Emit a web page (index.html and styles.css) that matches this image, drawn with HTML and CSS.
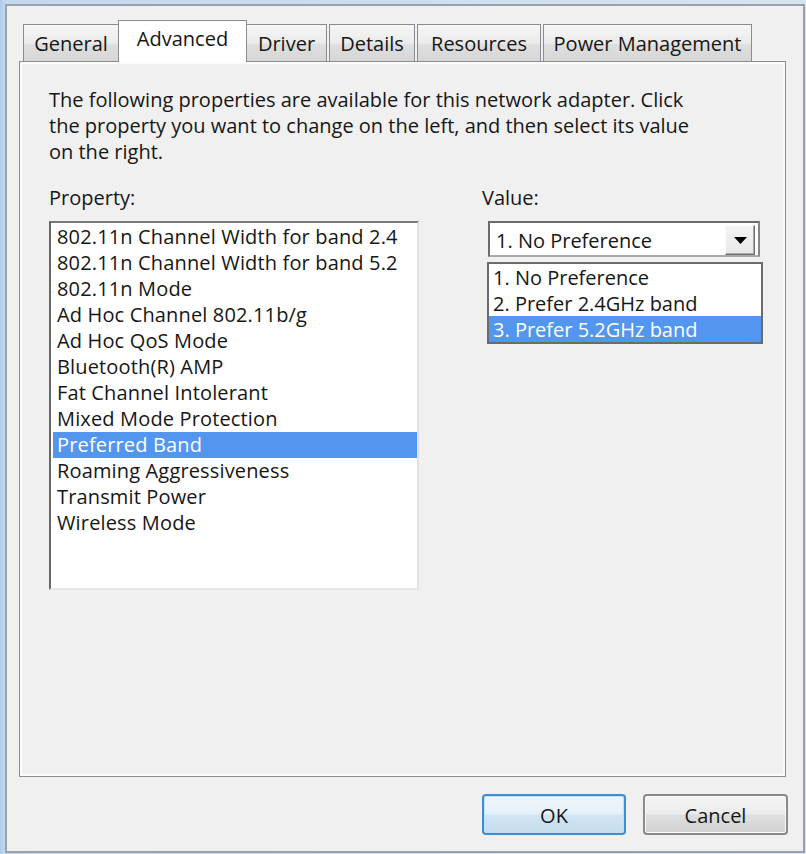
FILE: index.html
```html
<!DOCTYPE html>
<html lang="en">
<head>
<meta charset="utf-8">
<title>Adapter Properties - Advanced</title>
<link rel="stylesheet" href="styles.css">
</head>
<body>
<div class="window">
  <div class="tabs">
    <div class="tab t-general">General</div>
    <div class="tab active t-advanced">Advanced</div>
    <div class="tab t-driver">Driver</div>
    <div class="tab t-details">Details</div>
    <div class="tab t-resources">Resources</div>
    <div class="tab t-power">Power Management</div>
  </div>
  <div class="panel">
    <p class="desc">The following properties are available for this network adapter. Click<br>the property you want to change on the left, and then select its value<br>on the right.</p>
    <div class="cols">
      <div class="col-prop">
        <div class="label">Property:</div>
        <ul class="listbox">
          <li>802.11n Channel Width for band 2.4</li>
          <li>802.11n Channel Width for band 5.2</li>
          <li>802.11n Mode</li>
          <li>Ad Hoc Channel 802.11b/g</li>
          <li>Ad Hoc QoS Mode</li>
          <li>Bluetooth(R) AMP</li>
          <li>Fat Channel Intolerant</li>
          <li>Mixed Mode Protection</li>
          <li class="sel">Preferred Band</li>
          <li>Roaming Aggressiveness</li>
          <li>Transmit Power</li>
          <li>Wireless Mode</li>
        </ul>
      </div>
      <div class="col-value">
        <div class="label">Value:</div>
        <div class="combo">
          <span class="combo-text">1. No Preference</span>
          <span class="drop-btn"><svg width="13" height="7" viewBox="0 0 13 7"><polygon points="0,0 13,0 6.5,7" fill="#000"/></svg></span>
        </div>
        <ul class="dropdown">
          <li>1. No Preference</li>
          <li>2. Prefer 2.4GHz band</li>
          <li class="sel">3. Prefer 5.2GHz band</li>
        </ul>
      </div>
    </div>
  </div>
  <div class="buttons">
    <button class="btn btn-ok">OK</button>
    <button class="btn btn-cancel">Cancel</button>
  </div>
</div>
</body>
</html>
```
FILE: styles.css
```css
* { box-sizing: border-box; }
html, body { margin: 0; padding: 0; }
body {
  width: 806px;
  height: 854px;
  overflow: hidden;
  background: linear-gradient(90deg, #aecbe9 0, #c3d8ee 5px, #d6e4f2 100%);
  font-family: "Open Sans", "Noto Sans", sans-serif;
  font-size: 20px;
  color: #161616;
}
.window {
  margin: 4px 0 0 5px;
  width: 800px;
  height: 849px;
  border: 2px solid #97a2ae;
  background: #f0f0f0;
  display: flex;
  flex-direction: column;
}
.tabs {
  display: flex;
  align-items: flex-end;
  height: 42px;
  margin: 14px 0 -1px 12px;
  position: relative;
  z-index: 1;
}
.tab {
  height: 37px;
  margin-bottom: 1px;
  margin-left: 2px;
  border: 1px solid #898c95;
  border-bottom: none;
  background: linear-gradient(#f6f6f6, #ebebeb 50%, #dedede 55%, #d6d6d6);
  text-align: center;
  line-height: 26px;
  padding-top: 6px;
  white-space: nowrap;
}
.tab.active {
  height: 42px;
  margin-bottom: 0;
  background: #fff;
  padding-top: 5px;
  position: relative;
  z-index: 2;
}
.t-general { width: 96px; margin-left: 4px; }
.t-advanced { width: 129px; margin-left: -1px; }
.t-driver { width: 81px; margin-left: -1px; }
.t-details { width: 86px; }
.t-resources { width: 124px; }
.t-power { width: 209px; }
.panel {
  margin: 0 17px 0 12px;
  height: 716px;
  border: 1px solid #898c95;
  background: #f0f0f0;
  box-shadow: inset 0 0 0 2px #fbfbfb;
  padding: 25px 0 0 29px;
}
.desc {
  margin: 0;
  line-height: 26px;
  white-space: nowrap;
}
.cols {
  display: flex;
  margin-top: 20px;
}
.label { line-height: 26px; }
.listbox {
  margin: 10px 0 0;
  width: 370px;
  height: 369px;
  list-style: none;
  padding: 1px 0 0 2px;
  border: 2px solid;
  border-color: #7a7a7a #e2e2e2 #e6e6e6 #676767;
  background: #fff;
}
.listbox li, .dropdown li {
  height: 26px;
  line-height: 26px;
  padding-left: 4px;
  white-space: nowrap;
}
.listbox li { letter-spacing: 0.15px; }
.sel {
  background: #5296f0;
  color: #fff;
}
.col-value { margin-left: 63px; }
.combo {
  margin: 10px 0 0 6px;
  width: 272px;
  height: 36px;
  border: 2px solid;
  border-color: #6b6b6b #858585 #a8a8a8 #6b6b6b;
  background: #fff;
  display: flex;
  padding: 2px 3px 0 6px;
  line-height: 26px;
}
.combo-text { align-self: center; white-space: nowrap; padding-top: 2px; }
.drop-btn {
  margin-left: auto;
  width: 30px;
  height: 30px;
  background: linear-gradient(#f4f4f4, #e8e8e8);
  border: 1px solid;
  border-color: #fbfbfb #6e6e6e #6e6e6e #fbfbfb;
  box-shadow: inset -1px -1px 0 #a8a8a8;
  display: flex;
  align-items: center;
  justify-content: center;
}
.drop-btn svg { display: block; }
.dropdown {
  margin: 5px 0 0 5px;
  width: 276px;
  border: 2px solid #6b6b6b;
  background: #fff;
  list-style: none;
  padding: 0;
}
.dropdown li { padding-top: 1px; line-height: 25px; }
.buttons {
  display: flex;
  justify-content: flex-end;
  gap: 17px;
  margin-top: 17px;
  padding-right: 15px;
}
.btn {
  height: 41px;
  font: inherit;
  color: #161616;
  line-height: 26px;
  border-radius: 4px;
  padding: 2px 0 0;
}
.btn-ok {
  width: 144px;
  border: 2px solid #3d8fd1;
  background: linear-gradient(#f0f6fb, #e5f0f8 48%, #d2e5f3 52%, #c5dded);
  box-shadow: inset 0 0 0 1px #b9e0f8;
}
.btn-cancel {
  width: 145px;
  border: 2px solid #8a8a8a;
  background: linear-gradient(#f3f3f3, #ececec 48%, #dedede 52%, #d2d2d2);
  box-shadow: inset 0 0 0 1px #fbfbfb;
}
```
